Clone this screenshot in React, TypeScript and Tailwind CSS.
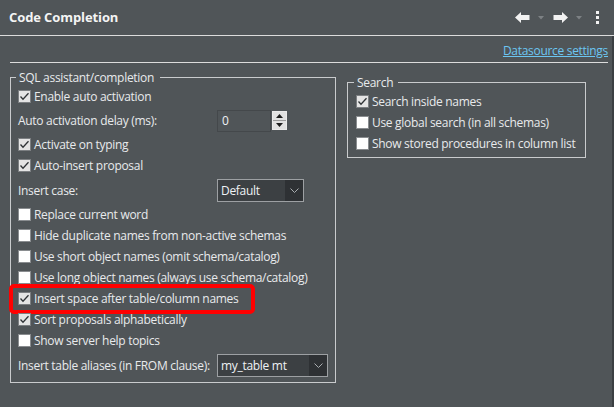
import React from "react";

const Check = ({ checked }: { checked: boolean }) => (
  <span
    className={
      "flex h-[13px] w-[13px] shrink-0 items-center justify-center border " +
      (checked ? "border-[#7c7f82] bg-[#e4e4e4]" : "border-[#8a8d90] bg-white")
    }
  >
    {checked && (
      <svg width="11" height="11" viewBox="0 0 11 11">
        <polyline points="1.5,5.5 4,8.2 9.5,2.2" fill="none" stroke="#2f3336" strokeWidth="1.3" />
      </svg>
    )}
  </span>
);

const Row = ({ checked, label, highlight }: { checked: boolean; label: string; highlight?: boolean }) => (
  <div className="relative flex h-[21px] items-center gap-[3px] whitespace-nowrap">
    <Check checked={checked} />
    <span>{label}</span>
    {highlight && (
      <span className="absolute -left-[9px] -top-[4px] h-[30px] w-[246px] rounded-[5px] border-4 border-[#ff0000]" />
    )}
  </div>
);

const Chevron = () => (
  <svg width="9" height="5" viewBox="0 0 9 5">
    <polyline points="0.5,0.5 4.5,4.5 8.5,0.5" fill="none" stroke="#a9adb0" strokeWidth="1" />
  </svg>
);

const Select = ({ value, width }: { value: string; width: string }) => (
  <div className={"flex h-[23px] border border-[#9da0a3] bg-[#3c4043] " + width}>
    <span className="flex flex-1 items-center pl-[3px] text-[#eef2f5]">{value}</span>
    <span className="flex w-[18px] items-center justify-center bg-[#2e3134]">
      <Chevron />
    </span>
  </div>
);

const Arrow = ({ flip }: { flip?: boolean }) => (
  <svg width="15" height="11" viewBox="0 0 15 11" className={flip ? "-scale-x-100" : ""}>
    <path d="M0 5.5 L6 0 L6 3 L14.5 3 L14.5 8 L6 8 L6 11 Z" fill="#f2f2f2" />
  </svg>
);

const Tri = () => (
  <svg width="6" height="4" viewBox="0 0 6 4">
    <path d="M0 0 L6 0 L3 3.5 Z" fill="#7d8184" />
  </svg>
);

export default function App() {
  return (
    <div className="flex h-[407px] w-[614px] flex-col overflow-hidden bg-[#505558] font-['Open_Sans',sans-serif] text-[12px] leading-[17px] tracking-[-0.3px] text-[#e8eaec]">
      <div className="flex h-[36px] shrink-0 items-center justify-between border-b border-[#dcdcdc] pl-[9px] pr-[15px]">
        <span className="text-[13px] font-bold tracking-[-0.1px] text-[#f4f4f4]">Code Completion</span>
        <div className="flex items-center">
          <Arrow />
          <span className="ml-[8px]"><Tri /></span>
          <span className="ml-[9px]"><Arrow flip /></span>
          <span className="ml-[8px]"><Tri /></span>
          <span className="ml-[14px] flex flex-col gap-[2px]">
            <span className="h-[3px] w-[3px] bg-[#f2f2f2]" />
            <span className="h-[3px] w-[3px] bg-[#f2f2f2]" />
            <span className="h-[3px] w-[3px] bg-[#f2f2f2]" />
          </span>
        </div>
      </div>
      <div className="flex flex-1 border-r-2 border-[#3b3f42]">
        <div className="flex flex-1 flex-col pl-[10px] pr-[4px]">
          <div className="flex h-[26px] items-center justify-end pt-[2px]">
            <span className="text-[#6cc6f2] underline">Datasource settings</span>
          </div>
          <div className="h-px bg-[#dcdcdc]" />
          <div className="mt-[6px] flex items-start gap-[11px]">
            <fieldset className="w-[326px] border border-[#c9cbcd] pb-[3px] pl-[7px]">
              <legend className="-ml-[2px] pl-[3px] pr-[6px]">SQL assistant/completion</legend>
              <Row checked label="Enable auto activation" />
              <div className="flex h-[27px] items-center whitespace-nowrap">
                <span className="w-[199px]">Auto activation delay (ms):</span>
                <div className="flex items-center gap-[1px]">
                  <div className="flex h-[22px] w-[54px] items-center border border-[#44484b] pl-[4px] text-[#eef2f5]">0</div>
                  <div className="flex h-[19px] w-[15px] flex-col border border-[#eaeaea] bg-[#e1e1e1]">
                    <span className="flex flex-1 items-center justify-center border-b border-[#9a9a9a]">
                      <svg width="7" height="4" viewBox="0 0 7 4"><path d="M0 4 L7 4 L3.5 0 Z" fill="#1c1c1c" /></svg>
                    </span>
                    <span className="flex flex-1 items-center justify-center">
                      <svg width="7" height="4" viewBox="0 0 7 4"><path d="M0 0 L7 0 L3.5 4 Z" fill="#1c1c1c" /></svg>
                    </span>
                  </div>
                </div>
              </div>
              <Row checked label="Activate on typing" />
              <Row checked label="Auto-insert proposal" />
              <div className="flex h-[28px] items-center whitespace-nowrap">
                <span className="w-[199px]">Insert case:</span>
                <Select value="Default" width="w-[87px]" />
              </div>
              <Row checked={false} label="Replace current word" />
              <Row checked={false} label="Hide duplicate names from non-active schemas" />
              <Row checked={false} label="Use short object names (omit schema/catalog)" />
              <Row checked={false} label="Use long object names (always use schema/catalog)" />
              <Row checked highlight label="Insert space after table/column names" />
              <Row checked label="Sort proposals alphabetically" />
              <Row checked={false} label="Show server help topics" />
              <div className="flex h-[28px] items-center whitespace-nowrap">
                <span className="w-[199px]">Insert table aliases (in FROM clause):</span>
                <Select value="my_table mt" width="w-[111px]" />
              </div>
            </fieldset>
            <fieldset className="mt-[5px] w-[239px] border border-[#c9cbcd] pb-[3px] pl-[8px]">
              <legend className="-ml-[2px] pl-[3px] pr-[5px]">Search</legend>
              <Row checked label="Search inside names" />
              <Row checked={false} label="Use global search (in all schemas)" />
              <Row checked={false} label="Show stored procedures in column list" />
            </fieldset>
          </div>
        </div>
      </div>
    </div>
  );
}
